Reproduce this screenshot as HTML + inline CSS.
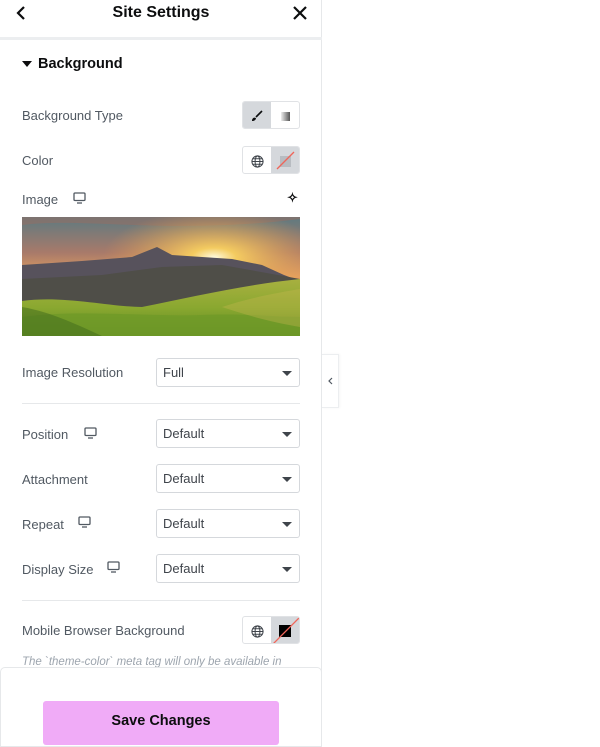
<!DOCTYPE html>
<html><head><meta charset="utf-8"><style>
*{margin:0;padding:0;box-sizing:border-box}
body{width:600px;height:739px;background:#fff;font-family:"Liberation Sans",sans-serif;position:relative;overflow:hidden;color:#3f444b}
.panel{position:absolute;left:0;top:0;width:322px;height:739px;border-right:1px solid #e6e8ea;background:#fff}
.hdr{position:absolute;left:0;top:0;width:322px;height:40px;border-bottom:3px solid #eceef0}
.hdr .t{position:absolute;left:0;width:322px;text-align:center;top:4px;font-size:16px;font-weight:bold;color:#0c0d0e}
.lbl{position:absolute;left:22px;font-size:13px;color:#515962}
.sel{position:absolute;left:156px;width:144px;height:29px;border:1px solid #d5d8dc;border-radius:3px;font-size:13px;color:#3f444b;padding:6px 0 0 6px}
.sel:after{content:"";position:absolute;right:7px;top:12px;border:5px solid transparent;border-top:5px solid #3f444b;border-bottom:0}
.grp{position:absolute;left:242px;width:58px;height:28px;border:1px solid #e0e2e5;border-radius:3px;overflow:hidden;display:flex}
.grp div{width:29px;height:28px;display:flex;align-items:center;justify-content:center}
.on{background:#d5d8dc}
.hr{position:absolute;left:22px;width:278px;height:1px;background:#e6e8ea}
.mon{position:absolute}
</style></head><body>
<div class="panel">
<div class="hdr">
<svg style="position:absolute;left:15px;top:5px" width="12" height="16" viewBox="0 0 12 16"><path d="M9 2 L3 8 L9 14" fill="none" stroke="#0c0d0e" stroke-width="2.2"/></svg>
<div class="t">Site Settings</div>
<svg style="position:absolute;left:292px;top:5px" width="16" height="16" viewBox="0 0 16 16"><path d="M2 2L14 14M14 2L2 14" stroke="#0c0d0e" stroke-width="2.2"/></svg>
</div>
<svg style="position:absolute;left:22px;top:61px" width="10" height="6"><path d="M0 0H10L5 6Z" fill="#0c0d0e"/></svg>
<div style="position:absolute;left:38px;top:56px;font-size:14.5px;font-weight:bold;color:#0c0d0e">Background</div>

<div class="lbl" style="top:108px">Background Type</div>
<div class="grp" style="top:101px"><div class="on"><svg width="12" height="12" viewBox="0 0 12 12"><path d="M11 1L5 7" stroke="#0c0d0e" stroke-width="1.6"/><path d="M1 11C1 8 3 7 5 8 5 10 3 11 1 11Z" fill="#0c0d0e"/></svg></div><div><div style="width:9px;height:9px;background:linear-gradient(90deg,#eee,#555)"></div></div></div>

<div class="lbl" style="top:153px">Color</div>
<div class="grp" style="top:146px"><div><svg width="13" height="13" viewBox="0 0 14 14" fill="none" stroke="#3f444b" stroke-width="1.1"><circle cx="7" cy="7" r="6"/><ellipse cx="7" cy="7" rx="2.6" ry="6"/><path d="M1 7H13M2 4H12M2 10H12"/></svg></div><div class="on"><svg width="26" height="26"><rect x="8" y="8" width="11" height="11" fill="#b8bcc1"/><path d="M5 21L22 4" stroke="#f0655a" stroke-width="1.3"/></svg></div></div>

<div class="lbl" style="top:192px">Image</div>
<svg class="mon" style="left:73px;top:192px" width="13" height="12" viewBox="0 0 13 12"><rect x="1" y="1" width="11" height="7.5" rx="1" fill="none" stroke="#515962" stroke-width="1.3"/><path d="M4 11H9" stroke="#515962" stroke-width="1.3"/></svg>
<div style="position:absolute;left:287px;top:190px;font-size:13px;font-weight:bold;color:#0c0d0e">✧</div>

<svg style="position:absolute;left:22px;top:217px" width="278" height="119" viewBox="0 0 278 119">
<defs>
<linearGradient id="sky" x1="0" y1="0" x2="0" y2="1"><stop offset="0" stop-color="#5f7a80"/><stop offset=".3" stop-color="#a87a6a"/><stop offset=".5" stop-color="#e3a060"/></linearGradient>
<radialGradient id="sun" cx="0.69" cy="0.34" r="0.4"><stop offset="0" stop-color="#fffbe0"/><stop offset=".2" stop-color="#f8d060" stop-opacity=".95"/><stop offset="1" stop-color="#e8974c" stop-opacity="0"/></radialGradient>
<linearGradient id="gr" x1="0" y1="0" x2="0" y2="1"><stop offset="0" stop-color="#a8b040"/><stop offset=".5" stop-color="#8aa830"/><stop offset="1" stop-color="#5f8a22"/></linearGradient>
</defs>
<rect width="278" height="119" fill="url(#sky)"/>
<path d="M0 8C60 0 150 18 278 2V0H0Z" fill="#9a6b60" opacity=".5"/>
<rect width="278" height="119" fill="url(#sun)"/>
<path d="M0 48 L60 44 L110 40 L135 30 L150 38 L210 42 L240 48 L262 58 L278 64 V119 H0Z" fill="#57525c"/>
<path d="M0 62 L80 58 L140 50 L200 48 L278 62 V119 H0Z" fill="#4f4e48"/>
<path d="M0 84 C40 78 90 90 120 90 C170 80 220 68 278 62 V119 H0Z" fill="url(#gr)"/>
<path d="M0 100 C60 92 120 100 180 98 C220 96 250 100 278 100 V119 H0Z" fill="#6f9a28" opacity=".8"/>
<path d="M0 90 C30 95 60 110 80 119 H0Z" fill="#3f6a1c" opacity=".5"/>
<path d="M200 90 C230 80 260 75 278 72 V110 C250 105 230 100 200 90Z" fill="#c8b850" opacity=".35"/>
</svg>

<div class="lbl" style="top:365px">Image Resolution</div>
<div class="sel" style="top:358px">Full</div>
<div class="hr" style="top:403px"></div>

<div class="lbl" style="top:427px">Position</div>
<svg class="mon" style="left:84px;top:427px" width="13" height="12" viewBox="0 0 13 12"><rect x="1" y="1" width="11" height="7.5" rx="1" fill="none" stroke="#515962" stroke-width="1.3"/><path d="M4 11H9" stroke="#515962" stroke-width="1.3"/></svg>
<div class="sel" style="top:419px">Default</div>

<div class="lbl" style="top:472px">Attachment</div>
<div class="sel" style="top:464px">Default</div>

<div class="lbl" style="top:517px">Repeat</div>
<svg class="mon" style="left:78px;top:516px" width="13" height="12" viewBox="0 0 13 12"><rect x="1" y="1" width="11" height="7.5" rx="1" fill="none" stroke="#515962" stroke-width="1.3"/><path d="M4 11H9" stroke="#515962" stroke-width="1.3"/></svg>
<div class="sel" style="top:509px">Default</div>

<div class="lbl" style="top:562px">Display Size</div>
<svg class="mon" style="left:107px;top:561px" width="13" height="12" viewBox="0 0 13 12"><rect x="1" y="1" width="11" height="7.5" rx="1" fill="none" stroke="#515962" stroke-width="1.3"/><path d="M4 11H9" stroke="#515962" stroke-width="1.3"/></svg>
<div class="sel" style="top:554px">Default</div>
<div class="hr" style="top:600px"></div>

<div class="lbl" style="top:623px">Mobile Browser Background</div>
<div class="grp" style="top:616px"><div><svg width="13" height="13" viewBox="0 0 14 14" fill="none" stroke="#3f444b" stroke-width="1.1"><circle cx="7" cy="7" r="6"/><ellipse cx="7" cy="7" rx="2.6" ry="6"/><path d="M1 7H13M2 4H12M2 10H12"/></svg></div><div class="on"><svg width="28" height="28"><rect x="8" y="8" width="12" height="12" fill="#000"/><path d="M2 27L28 1" stroke="#f0655a" stroke-width="1.3"/></svg></div></div>
<div style="position:absolute;left:22px;top:656px;font-size:11.5px;font-style:italic;color:#9da5ae">The `theme-color` meta tag will only be available in</div>

<div style="position:absolute;left:0;top:667px;width:322px;height:80px;background:#fff;border:1px solid #e6e8ea;border-radius:5px 5px 0 0"></div>
<div style="position:absolute;left:43px;top:701px;width:236px;height:44px;background:#f0abf7;border-radius:3px;text-align:center;padding-top:12px;font-size:14.5px;font-weight:bold;color:#0c0d0e">Save Changes</div>
</div>
<div style="position:absolute;left:322px;top:354px;width:17px;height:54px;background:#fff;border:1px solid #eceef0;border-left:0;box-shadow:1px 0 2px rgba(0,0,0,.04)"></div>
<svg style="position:absolute;left:327px;top:377px" width="6" height="8"><path d="M5 1L2 4L5 7" fill="none" stroke="#515962" stroke-width="1.2"/></svg>
</body></html>
